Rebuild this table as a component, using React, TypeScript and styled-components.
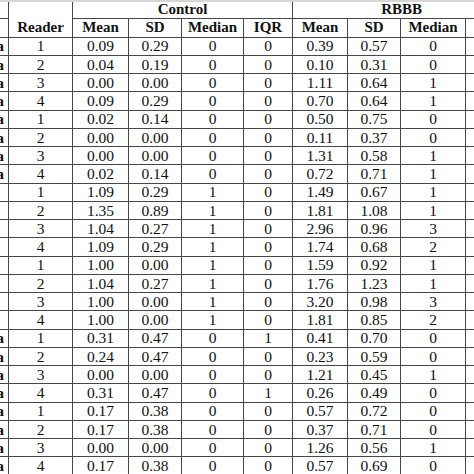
import React from 'react';
import styled, { createGlobalStyle } from 'styled-components';

const GlobalStyle = createGlobalStyle`
  html, body {
    margin: 0;
    padding: 0;
    background: #ffffff;
    overflow: hidden;
  }
`;

const Page = styled.div`
  width: 474px;
  height: 474px;
  overflow: hidden;
  border-top: 2px solid #d6d6d6;
  box-sizing: border-box;
`;

const Table = styled.table`
  border-collapse: collapse;
  table-layout: fixed;
  width: 561px;
  margin-left: -51px;
  margin-top: -2px;
  font-family: 'Liberation Serif', 'Times New Roman', serif;
  font-size: 15.5px;
  color: #111111;
  line-height: 1;
`;

const Row = styled.tr`
  height: 18.25px;
`;

const Cell = styled.td`
  border: 1px solid #474747;
  padding: 0 2px;
  text-align: center;
  vertical-align: middle;
  white-space: nowrap;
  overflow: hidden;
`;

const LabelCell = styled(Cell)`
  text-align: right;
  padding-right: 4px;
  font-weight: 700;
`;

const HeadCell = styled.th<{ $align?: string }>`
  border: 1px solid #474747;
  padding: 0 2px 1px;
  font-weight: 700;
  font-size: 15px;
  text-align: center;
  vertical-align: ${({ $align }) => $align || 'middle'};
  white-space: nowrap;
  overflow: hidden;
`;

const ReaderHead = styled(HeadCell)`
  padding-bottom: 2px;
`;

const widths = [59, 64, 56, 53, 62, 49, 55, 53, 65, 45];

type DataRow = [string, string, string, string, string, string, string, string, string];

const rows: DataRow[] = [
  ['1', '0.09', '0.29', '0', '0', '0.39', '0.57', '0', '0'],
  ['2', '0.04', '0.19', '0', '0', '0.10', '0.31', '0', '0'],
  ['3', '0.00', '0.00', '0', '0', '1.11', '0.64', '1', '1'],
  ['4', '0.09', '0.29', '0', '0', '0.70', '0.64', '1', '1'],
  ['1', '0.02', '0.14', '0', '0', '0.50', '0.75', '0', '1'],
  ['2', '0.00', '0.00', '0', '0', '0.11', '0.37', '0', '0'],
  ['3', '0.00', '0.00', '0', '0', '1.31', '0.58', '1', '1'],
  ['4', '0.02', '0.14', '0', '0', '0.72', '0.71', '1', '1'],
  ['1', '1.09', '0.29', '1', '0', '1.49', '0.67', '1', '1'],
  ['2', '1.35', '0.89', '1', '0', '1.81', '1.08', '1', '1'],
  ['3', '1.04', '0.27', '1', '0', '2.96', '0.96', '3', '2'],
  ['4', '1.09', '0.29', '1', '0', '1.74', '0.68', '2', '1'],
  ['1', '1.00', '0.00', '1', '0', '1.59', '0.92', '1', '1'],
  ['2', '1.04', '0.27', '1', '0', '1.76', '1.23', '1', '2'],
  ['3', '1.00', '0.00', '1', '0', '3.20', '0.98', '3', '2'],
  ['4', '1.00', '0.00', '1', '0', '1.81', '0.85', '2', '1'],
  ['1', '0.31', '0.47', '0', '1', '0.41', '0.70', '0', '1'],
  ['2', '0.24', '0.47', '0', '0', '0.23', '0.59', '0', '0'],
  ['3', '0.00', '0.00', '0', '0', '1.21', '0.45', '1', '1'],
  ['4', '0.31', '0.47', '0', '1', '0.26', '0.49', '0', '0'],
  ['1', '0.17', '0.38', '0', '0', '0.57', '0.72', '0', '1'],
  ['2', '0.17', '0.38', '0', '0', '0.37', '0.71', '0', '1'],
  ['3', '0.00', '0.00', '0', '0', '1.26', '0.56', '1', '1'],
  ['4', '0.17', '0.38', '0', '0', '0.57', '0.69', '0', '1'],
];

const labelFor = (i: number) => (i >= 8 && i < 16 ? '' : 'Delta');

const App = () => {
  return (
    <Page>
      <GlobalStyle />
      <Table>
        <colgroup>
          {widths.map((w, i) => (
            <col key={i} style={{ width: w }} />
          ))}
        </colgroup>
        <thead>
          <Row>
            <HeadCell />
            <ReaderHead rowSpan={2} $align="bottom">
              Reader
            </ReaderHead>
            <HeadCell colSpan={4}>Control</HeadCell>
            <HeadCell colSpan={4}>RBBB</HeadCell>
          </Row>
          <Row>
            <HeadCell />
            <HeadCell>Mean</HeadCell>
            <HeadCell>SD</HeadCell>
            <HeadCell>Median</HeadCell>
            <HeadCell>IQR</HeadCell>
            <HeadCell>Mean</HeadCell>
            <HeadCell>SD</HeadCell>
            <HeadCell>Median</HeadCell>
            <HeadCell>IQR</HeadCell>
          </Row>
        </thead>
        <tbody>
          {rows.map((r, i) => (
            <Row key={i}>
              <LabelCell>{labelFor(i)}</LabelCell>
              {r.map((v, j) => (
                <Cell key={j}>{v}</Cell>
              ))}
            </Row>
          ))}
        </tbody>
      </Table>
    </Page>
  );
};

export default App;
